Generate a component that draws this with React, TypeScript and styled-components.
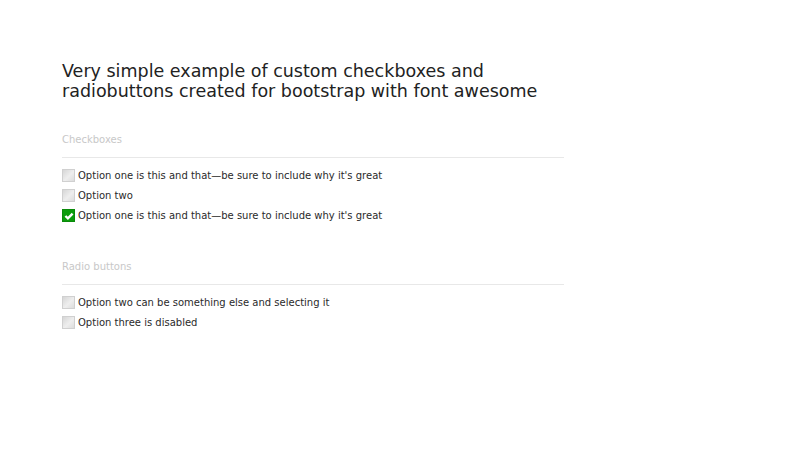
import React from 'react';
import styled, { createGlobalStyle } from 'styled-components';

const GlobalStyle = createGlobalStyle`
  html, body {
    margin: 0;
    padding: 0;
    background: #fff;
  }
  body {
    font-family: 'DejaVu Sans', sans-serif;
    color: #333;
  }
`;

const Page = styled.div`
  width: 502px;
  padding: 61px 0 0 62px;
`;

const Title = styled.h1`
  margin: 0 0 31px;
  font-size: 17.5px;
  line-height: 20px;
  font-weight: normal;
  color: #222;
`;

const Section = styled.section`
  margin-bottom: 37px;
`;

const SectionTitle = styled.div`
  font-size: 10px;
  line-height: 16px;
  color: #c8c8c8;
  padding-bottom: 9px;
  border-bottom: 1px solid #e8e8e8;
  margin-bottom: 11px;
`;

const List = styled.div`
  display: flex;
  flex-direction: column;
  gap: 7px;
`;

const Row = styled.label`
  display: flex;
  align-items: center;
  gap: 3px;
  font-size: 10px;
  line-height: 13px;
  color: #2a2a2a;
`;

const Box = styled.span<{ $checked?: boolean }>`
  width: 13px;
  height: 13px;
  box-sizing: border-box;
  display: flex;
  align-items: center;
  justify-content: center;
  border: 1px solid ${(p) => (p.$checked ? '#0a8a0a' : '#d0d0d0')};
  background: ${(p) =>
    p.$checked ? '#0c9c0c' : 'linear-gradient(135deg, #d6d6d6, #eeeeee 55%, #dcdcdc)'};
`;

type Option = { label: string; checked?: boolean };

const checkboxes: Option[] = [
  { label: "Option one is this and that\u2014be sure to include why it's great" },
  { label: 'Option two' },
  { label: "Option one is this and that\u2014be sure to include why it's great", checked: true },
];

const radios: Option[] = [
  { label: 'Option two can be something else and selecting it' },
  { label: 'Option three is disabled' },
];

const Check = () => (
  <svg width="10" height="10" viewBox="0 0 10 10">
    <path d="M1.4 5 L3.9 7.4 L8.6 2.6" fill="none" stroke="#fff" strokeWidth="2.4" />
  </svg>
);

const OptionList: React.FC<{ items: Option[] }> = ({ items }) => (
  <List>
    {items.map((o, i) => (
      <Row key={i}>
        <Box $checked={o.checked}>{o.checked && <Check />}</Box>
        {o.label}
      </Row>
    ))}
  </List>
);

const App: React.FC = () => (
  <>
    <GlobalStyle />
    <Page>
      <Title>
        Very simple example of custom checkboxes and radiobuttons created for bootstrap with font
        awesome
      </Title>
      <Section>
        <SectionTitle>Checkboxes</SectionTitle>
        <OptionList items={checkboxes} />
      </Section>
      <Section>
        <SectionTitle>Radio buttons</SectionTitle>
        <OptionList items={radios} />
      </Section>
    </Page>
  </>
);

export default App;
